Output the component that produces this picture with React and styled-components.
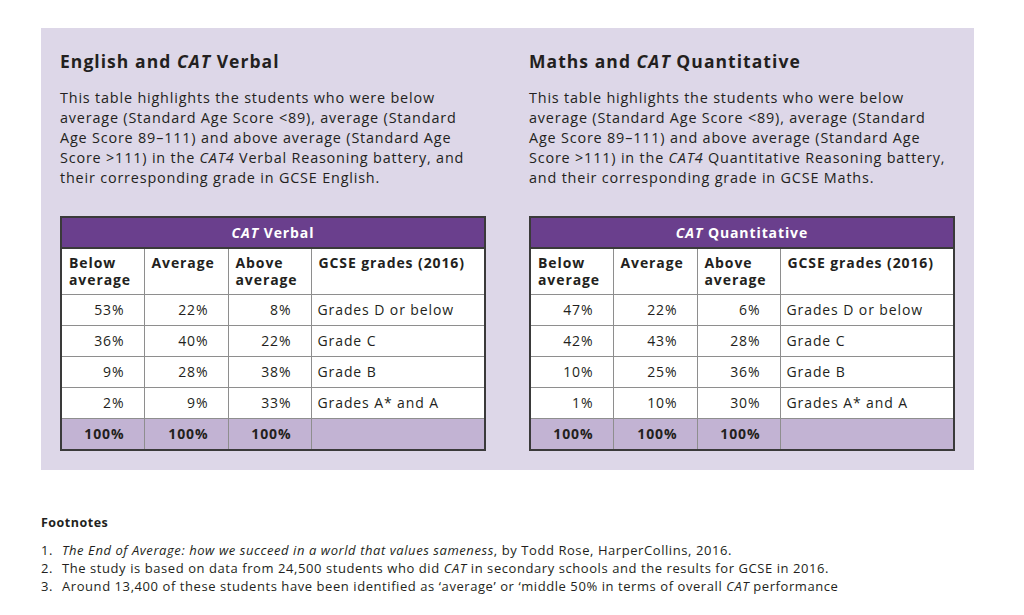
import React from "react";
import styled, { createGlobalStyle } from "styled-components";

const Global = createGlobalStyle`
  html, body { margin: 0; padding: 0; background: #ffffff; }
  body { font-family: "Open Sans", "DejaVu Sans", sans-serif; color: #231f20; }
`;

const Page = styled.div`
  width: 1024px;
  padding: 28px 0 0 41px;
  box-sizing: border-box;
`;

const Panel = styled.section`
  width: 933px;
  box-sizing: border-box;
  background: #ddd7e8;
  padding: 21px 19px 19px 19px;
  display: grid;
  grid-template-columns: 426px 426px;
  column-gap: 43px;
`;

const Column = styled.div`
  display: flex;
  flex-direction: column;
`;

const Title = styled.h2`
  margin: 0;
  font-size: 17.5px;
  line-height: 24px;
  font-weight: 700;
  letter-spacing: 1.05px;
  color: #231f20;
  white-space: nowrap;
`;

const Intro = styled.p`
  margin: 15px 0 0 0;
  font-size: 14.4px;
  line-height: 20px;
  font-weight: 400;
  letter-spacing: 0.82px;
  color: #231f20;
`;

const Line = styled.span`
  display: block;
  white-space: nowrap;
`;

const Table = styled.table`
  margin-top: 28px;
  width: 426px;
  border-collapse: collapse;
  table-layout: fixed;
  border: 2px solid #3a3a3a;
  font-size: 14px;
  letter-spacing: 0.9px;
  color: #231f20;
`;

const HeadCell = styled.th`
  background: #6a3f8d;
  color: #ffffff;
  font-weight: 700;
  height: 29px;
  padding: 0;
  text-align: center;
  border-bottom: 2px solid #3a3a3a;
`;

const SubHead = styled.th`
  background: #ffffff;
  font-weight: 700;
  text-align: left;
  vertical-align: top;
  height: 46px;
  padding: 6px 2px 0 7px;
  line-height: 16.5px;
  box-sizing: border-box;
  border: 1px solid #8e8e8e;
  white-space: nowrap;
`;

const Cell = styled.td`
  background: ${(p) => (p.$total ? "#c2b3d3" : "#ffffff")};
  font-weight: ${(p) => (p.$total ? 700 : 400)};
  text-align: ${(p) => (p.$text ? "left" : "right")};
  padding: ${(p) => (p.$text ? "0 2px 0 6px" : "0 19px 0 0")};
  height: 30px;
  border: 1px solid #8e8e8e;
  white-space: nowrap;
`;

const Footnotes = styled.div`
  margin-top: 45px;
  color: #231f20;
`;

const FootTitle = styled.div`
  font-weight: 700;
  font-size: 12.5px;
  letter-spacing: 0.5px;
  line-height: 16px;
`;

const List = styled.ol`
  margin: 10px 0 0 0;
  padding: 0;
  list-style: none;
  display: flex;
  flex-direction: column;
`;

const Item = styled.li`
  display: flex;
  font-size: 13px;
  line-height: 18px;
  letter-spacing: 0.57px;
  white-space: nowrap;
`;

const Num = styled.span`
  width: 21px;
  flex: none;
`;

const I = styled.i`
  font-style: italic;
`;

function DataTable({ label, rows }) {
  return (
    <Table>
      <colgroup>
        <col style={{ width: "83px" }} />
        <col style={{ width: "84px" }} />
        <col style={{ width: "83px" }} />
        <col />
      </colgroup>
      <thead>
        <tr>
          <HeadCell colSpan={4}>
            <I>CAT</I> {label}
          </HeadCell>
        </tr>
        <tr>
          <SubHead>Below<br />average</SubHead>
          <SubHead>Average</SubHead>
          <SubHead>Above<br />average</SubHead>
          <SubHead>GCSE grades (2016)</SubHead>
        </tr>
      </thead>
      <tbody>
        {rows.map((r) => (
          <tr key={r[3]}>
            <Cell>{r[0]}</Cell>
            <Cell>{r[1]}</Cell>
            <Cell>{r[2]}</Cell>
            <Cell $text>{r[3]}</Cell>
          </tr>
        ))}
        <tr>
          <Cell $total>100%</Cell>
          <Cell $total>100%</Cell>
          <Cell $total>100%</Cell>
          <Cell $total $text></Cell>
        </tr>
      </tbody>
    </Table>
  );
}

const verbal = [
  ["53%", "22%", "8%", "Grades D or below"],
  ["36%", "40%", "22%", "Grade C"],
  ["9%", "28%", "38%", "Grade B"],
  ["2%", "9%", "33%", "Grades A* and A"],
];

const quant = [
  ["47%", "22%", "6%", "Grades D or below"],
  ["42%", "43%", "28%", "Grade C"],
  ["10%", "25%", "36%", "Grade B"],
  ["1%", "10%", "30%", "Grades A* and A"],
];

export default function App() {
  return (
    <Page>
      <Global />
      <Panel>
        <Column>
          <Title>English and <I>CAT</I> Verbal</Title>
          <Intro>
            <Line>This table highlights the students who were below</Line>
            <Line>average (Standard Age Score &lt;89), average (Standard</Line>
            <Line>Age Score 89–111) and above average (Standard Age</Line>
            <Line>Score &gt;111) in the <I>CAT4</I> Verbal Reasoning battery, and</Line>
            <Line>their corresponding grade in GCSE English.</Line>
          </Intro>
          <DataTable label="Verbal" rows={verbal} />
        </Column>
        <Column>
          <Title>Maths and <I>CAT</I> Quantitative</Title>
          <Intro>
            <Line>This table highlights the students who were below</Line>
            <Line>average (Standard Age Score &lt;89), average (Standard</Line>
            <Line>Age Score 89–111) and above average (Standard Age</Line>
            <Line>Score &gt;111) in the <I>CAT4</I> Quantitative Reasoning battery,</Line>
            <Line>and their corresponding grade in GCSE Maths.</Line>
          </Intro>
          <DataTable label="Quantitative" rows={quant} />
        </Column>
      </Panel>
      <Footnotes>
        <FootTitle>Footnotes</FootTitle>
        <List>
          <Item>
            <Num>1.</Num>
            <span>
              <I>The End of Average: how we succeed in a world that values sameness</I>, by Todd Rose, HarperCollins, 2016.
            </span>
          </Item>
          <Item>
            <Num>2.</Num>
            <span>
              The study is based on data from 24,500 students who did <I>CAT</I> in secondary schools and the results for GCSE in 2016.
            </span>
          </Item>
          <Item>
            <Num>3.</Num>
            <span>
              Around 13,400 of these students have been identified as ‘average’ or ‘middle 50% in terms of overall <I>CAT</I> performance
            </span>
          </Item>
        </List>
      </Footnotes>
    </Page>
  );
}
